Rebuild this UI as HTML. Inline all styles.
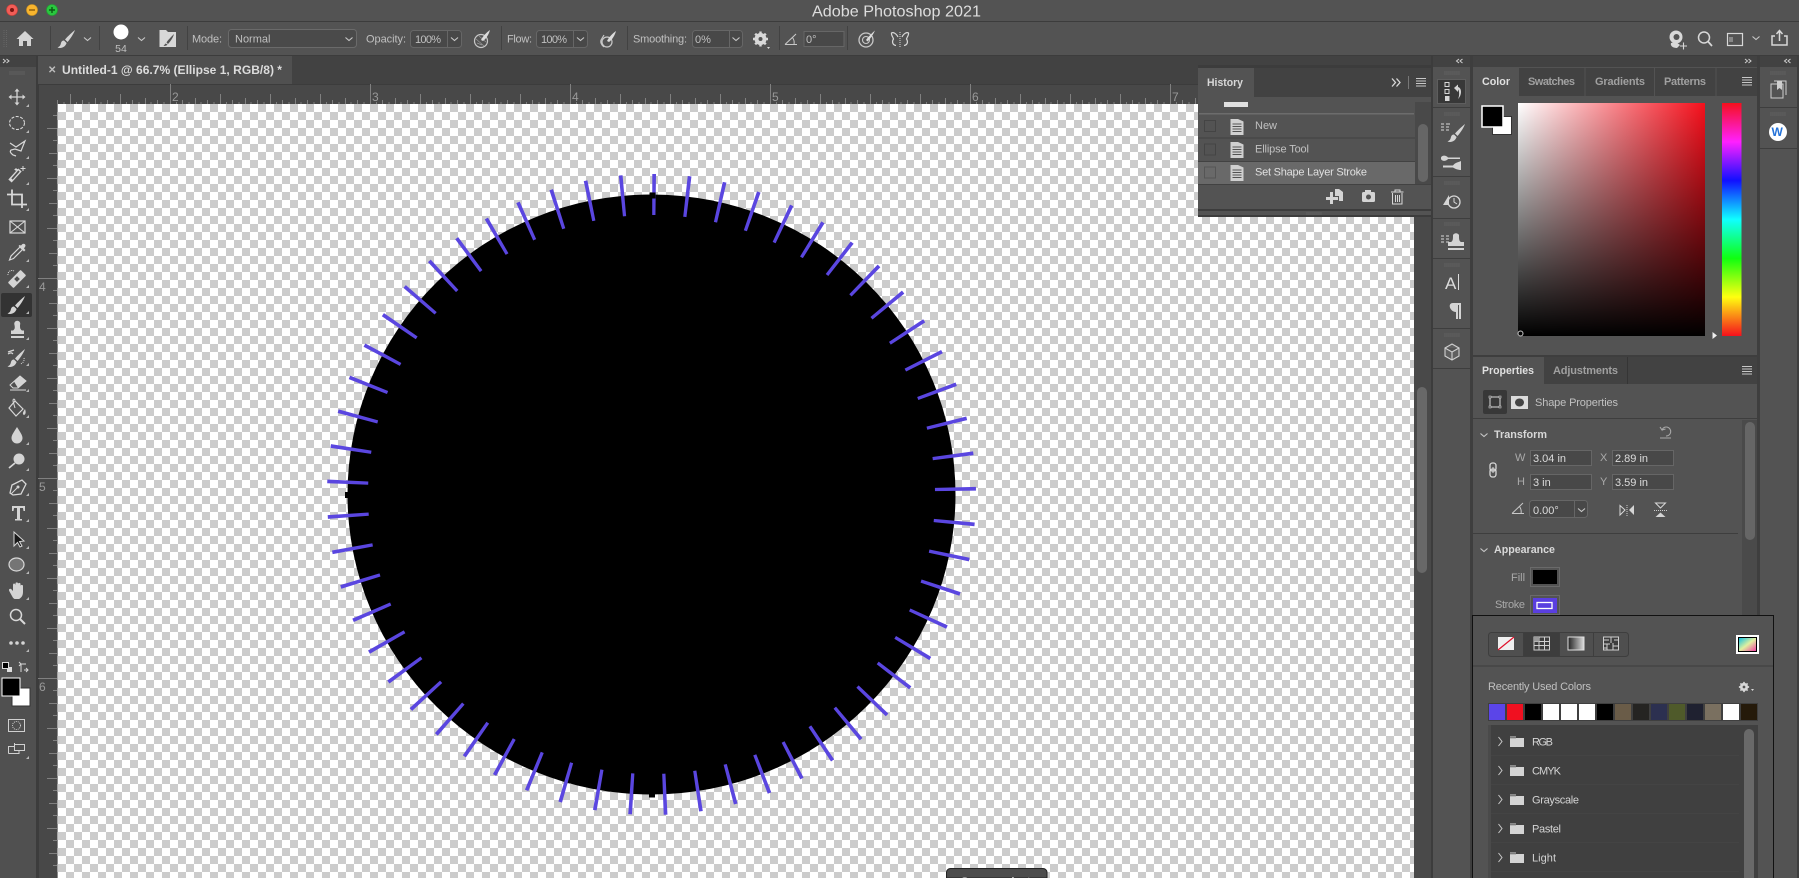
<!DOCTYPE html>
<html><head><meta charset="utf-8"><title>Adobe Photoshop 2021</title>
<style>
html,body{margin:0;padding:0;background:#535353;overflow:hidden;width:1799px;height:878px}
svg{display:block;font-family:"Liberation Sans",sans-serif}
text{fill:#c0c0c0;font-size:11px}
.b{font-weight:bold;fill:#d8d8d8}
.i{fill:#d4d4d4}
.s{fill:none;stroke:#d4d4d4;stroke-width:1.3}
</style></head><body>
<svg width="1799" height="878" viewBox="0 0 1799 878" xmlns="http://www.w3.org/2000/svg">
<defs>
<pattern id="chk" x="58" y="104" width="16" height="16" patternUnits="userSpaceOnUse">
<rect width="16" height="16" fill="#fff"/><rect x="8" width="8" height="8" fill="#ccc"/><rect y="8" width="8" height="8" fill="#ccc"/>
</pattern>
<pattern id="rh" x="170" y="84" width="200" height="20" patternUnits="userSpaceOnUse">
<g stroke="#808080" stroke-width="1">
<path d="M.5 0V20M50.5 10V20M100.5 10V20M150.5 10V20M25.5 14V20M75.5 14V20M125.5 14V20M175.5 14V20M12.5 16V20M37.5 16V20M62.5 16V20M87.5 16V20M112.5 16V20M137.5 16V20M162.5 16V20M187.5 16V20M6.5 18V20M19 18V20M31 18V20M44 18V20M56.5 18V20M69 18V20M81 18V20M94 18V20M106.5 18V20M119 18V20M131 18V20M144 18V20M156.5 18V20M169 18V20M181 18V20M194 18V20"/>
</g></pattern>
<pattern id="rv" x="38" y="78" width="19" height="200" patternUnits="userSpaceOnUse">
<g stroke="#808080" stroke-width="1">
<path d="M0 .5H19M9 50.5H19M9 100.5H19M9 150.5H19M11 25.5H19M11 75.5H19M11 125.5H19M11 175.5H19M15 12.5H19M15 37.5H19M15 62.5H19M15 87.5H19M15 112.5H19M15 137.5H19M15 162.5H19M15 187.5H19"/>
</g></pattern>
<linearGradient id="wr" x1="0" x2="1" y1="0" y2="0"><stop offset="0" stop-color="#fff"/><stop offset="1" stop-color="#f5101c"/></linearGradient>
<linearGradient id="bk" x1="0" x2="0" y1="0" y2="1"><stop offset="0" stop-color="#000" stop-opacity="0"/><stop offset="1" stop-color="#000"/></linearGradient>
<linearGradient id="hue" x1="0" x2="0" y1="0" y2="1"><stop offset="0" stop-color="#f5101c"/><stop offset=".167" stop-color="#ff20ff"/><stop offset=".333" stop-color="#1010ff"/><stop offset=".5" stop-color="#10ffff"/><stop offset=".667" stop-color="#10ff10"/><stop offset=".833" stop-color="#ffff10"/><stop offset="1" stop-color="#f5101c"/></linearGradient>
<linearGradient id="gg" x1="0" x2="1" y1="0" y2="0"><stop offset="0" stop-color="#222"/><stop offset="1" stop-color="#ddd"/></linearGradient>
<linearGradient id="rb" x1="0" x2="1" y1="0" y2="1"><stop offset="0" stop-color="#10c0e0"/><stop offset=".5" stop-color="#e0f0a0"/><stop offset="1" stop-color="#f040a0"/></linearGradient>
<g id="chev"><path d="M-3.5 -1.5L0 1.5L3.5 -1.5" fill="none" stroke="#c8c8c8" stroke-width="1.1"/></g>
<g id="menu"><path d="M-5 -3.5H5M-5 -1H5M-5 1.5H5M-5 4H5" stroke="#c8c8c8" stroke-width="1"/></g>
<g id="brush"><path class="i" d="M9 -9C6.5 -7 1.5 -2.5 -1 .5L1.6 3C4.6 -.5 7.8 -5.5 9 -9Z M-2 1.5C-5 1.5 -5 4.5 -5.5 5.8C-6 7.2 -7.5 8 -8.5 8.5C-5 9.8 -1 8.5 .6 4Z"/></g>
<g id="gear"><circle cx="0" cy="0" r="4.5" fill="none" stroke="#d8d8d8" stroke-width="3"/><path d="M0 -7.5V7.5M-7.5 0H7.5M-5.3 -5.3L5.3 5.3M5.3 -5.3L-5.3 5.3" stroke="#d8d8d8" stroke-width="2.4"/><circle r="2" fill="#535353"/></g>
<g id="doc"><path d="M-6.5 -8H1L6.5 -5.5V8H-6.5Z" fill="#d0d0d0"/><path d="M-4.5 -3H4.5M-4.5 -.5H4.5M-4.5 2H4.5M-4.5 4.5H4.5" stroke="#535353" stroke-width="1"/></g>
<g id="folder"><path d="M-7 -5H-1V-3.5H7V5.5H-7Z" fill="#d4d4d4"/><path d="M-7 -3.7H-1" stroke="#404040" stroke-width=".8"/></g>
<g id="tri"><path d="M0 3H3V0Z" fill="#b8b8b8"/></g>
<g id="grip"><path d="M-7 -2V2M-5 -2V2M-3 -2V2M-1 -2V2M1 -2V2M3 -2V2M5 -2V2M7 -2V2" stroke="#666" stroke-width=".7"/></g>
</defs>

<rect width="1799" height="878" fill="#535353"/>
<!-- title -->
<rect y="21" width="1799" height="1" fill="#3c3c3c"/>
<circle cx="12" cy="10" r="5.5" fill="#f25d57" stroke="#d8403a" stroke-width=".6"/><circle cx="12" cy="10" r="2" fill="#7a1612"/>
<circle cx="32" cy="10" r="5.5" fill="#f8b52e" stroke="#d89a20" stroke-width=".6"/><path d="M29 10H35" stroke="#8a5a0a" stroke-width="1.4"/>
<circle cx="52" cy="10" r="5.5" fill="#2ac73f" stroke="#1ea52f" stroke-width=".6"/><path d="M49 10H55M52 7V13" stroke="#0a5a14" stroke-width="1.4"/>
<text x="812" y="16.5" textLength="169" lengthAdjust="spacingAndGlyphs" style="font-size:16px;fill:#dedede">Adobe Photoshop 2021</text>

<!-- options bar -->
<rect y="55" width="1799" height="1" fill="#3c3c3c"/>
<path d="M4 30V47M6.5 30V47" stroke="#656565" stroke-dasharray="1 1"/>
<path d="M50 26H51V50H50ZM99 26H100V50H99ZM187 26H188V50H187ZM501 26H502V50H501ZM627 26H628V50H627ZM779 26H780V50H779ZM847 26H848V50H847Z" fill="#424242"/>
<path class="i" d="M25 31L33.5 39H31V46H27V41H23V46H19V39H16.5Z"/>
<use href="#brush" x="66" y="39"/><use href="#chev" x="87.500" y="39"/>
<circle cx="121" cy="32" r="7.500" fill="#fff"/>
<text x="121" y="52" text-anchor="middle" style="font-size:10.500px">54</text>
<use href="#chev" x="141.500" y="39"/>
<path d="M159.500 30H166L168 32H176V47H159.500Z" fill="#d8d8d8"/><path d="M174 34C171 37 168 40 166.500 42.500L168 44C170 42 173 38 174 34ZM165.500 43.500L163.500 46C165.500 46 167 45.500 167.500 44.500Z" fill="#535353"/>
<text x="192" y="42.500" textLength="30">Mode:</text>
<rect x="228.500" y="29.500" width="128" height="18" rx="3" fill="#4a4a4a" stroke="#6a6a6a"/>
<text x="235" y="42.500">Normal</text><use href="#chev" x="349" y="39"/>
<text x="366" y="42.500" textLength="40">Opacity:</text>
<rect x="410.500" y="30.500" width="51" height="17" rx="3" fill="#484848" stroke="#666"/><path d="M447.500 31V47" stroke="#666"/>
<text x="415" y="43" textLength="26">100%</text><use href="#chev" x="454.500" y="39"/>
<circle cx="481" cy="41" r="6.500" fill="none" stroke="#c8c8c8" stroke-width="1.2"/><path d="M477 43L482 45M476 39L484 46M479 36L486 42" stroke="#999" stroke-width=".7"/><path d="M490 30C487 32 483 36 481 40L483 41C486 39 489 34 490 30Z" fill="#dcdcdc"/>
<text x="507" y="42.500" textLength="25">Flow:</text>
<rect x="536.500" y="30.500" width="51" height="17" rx="3" fill="#484848" stroke="#666"/><path d="M573.500 31V47" stroke="#666"/>
<text x="541" y="43" textLength="26">100%</text><use href="#chev" x="580.500" y="39"/>
<path d="M601 40C600 44 603 46 604 47M604 35L601 40" fill="none" stroke="#c8c8c8" stroke-width="1.200"/><circle cx="607" cy="42" r="5" fill="none" stroke="#c8c8c8" stroke-width="1.200"/><path d="M616 31C613 33 609 37 607 41L609 42C612 40 615 35 616 31Z" fill="#dcdcdc"/>
<text x="633" y="42.500" textLength="54">Smoothing:</text>
<rect x="692.500" y="30.500" width="50" height="17" rx="3" fill="#484848" stroke="#666"/><path d="M729.500 31V47" stroke="#666"/>
<text x="695" y="43">0%</text><use href="#chev" x="736" y="39"/>
<use href="#gear" x="760.500" y="39"/><path d="M767 47H770L768.500 49Z" fill="#d8d8d8"/>
<path d="M785 44.500H797M785 44.500L796 34" fill="none" stroke="#c8c8c8" stroke-width="1.100"/><path d="M792.500 37.500A9 9 0 0 1 794 44.500" fill="none" stroke="#c8c8c8"/>
<rect x="804" y="31.500" width="40" height="15" fill="#484848" stroke="#666"/><text x="806" y="43">0°</text>
<circle cx="866" cy="40" r="7" fill="none" stroke="#c8c8c8" stroke-width="1.300"/><circle cx="866" cy="40" r="3.500" fill="none" stroke="#c8c8c8" stroke-width="1.100"/><path d="M875 30.500C872 33 868 37 866 40L867.500 41.500C870 39 873 35 875 30.500Z" fill="#dcdcdc"/>
<path d="M900 32V47" stroke="#d8d8d8" stroke-dasharray="1 1"/><path d="M898 37C896 33 893 32 891.500 33C891 35 893 37 893.500 39C892 41 892 45 896 45.500M902 37C904 33 907 32 908.500 33C909 35 907 37 906.500 39C908 41 908 45 904 45.500" fill="none" stroke="#d8d8d8" stroke-width="1.200"/>
<circle cx="1676" cy="37" r="6.500" fill="#d8d8d8"/><path d="M1671 43C1670 46 1673 48 1677 48L1680 45L1676 42Z" fill="#d8d8d8"/><circle cx="1676.500" cy="37" r="3" fill="#535353"/><path d="M1680 46H1687M1683.500 42.500V49.500" stroke="#d8d8d8" stroke-width="1.100"/>
<circle cx="1704" cy="37.500" r="5.500" fill="none" stroke="#d8d8d8" stroke-width="1.500"/><path d="M1708 41.500L1712 46" stroke="#d8d8d8" stroke-width="1.700"/>
<rect x="1727.500" y="33.500" width="15" height="12" fill="none" stroke="#d8d8d8" stroke-width="1.200"/><path d="M1730 37V42M1732 37V42" stroke="#d8d8d8" stroke-width=".8"/>
<use href="#chev" x="1756" y="38"/>
<path d="M1775 36H1772V45H1787V36H1784" fill="none" stroke="#d8d8d8" stroke-width="1.500"/><path d="M1779.500 41V31M1776.500 34L1779.500 30.500L1782.500 34" fill="none" stroke="#d8d8d8" stroke-width="1.500"/>

<!-- doc area -->
<rect x="38" y="56" width="1394" height="28" fill="#424242"/>
<rect x="38" y="56" width="254" height="28" fill="#505050"/>
<text x="48" y="73" class="b" style="font-size:10px;fill:#bdbdbd">✕</text>
<text x="62" y="74" class="b" textLength="220" lengthAdjust="spacingAndGlyphs" style="font-size:12px;fill:#dcdcdc">Untitled-1 @ 66.7% (Ellipse 1, RGB/8) *</text>
<rect x="38" y="84" width="1376" height="20" fill="#484848"/>
<rect x="38" y="104" width="19.500" height="774" fill="#484848"/>
<rect x="38" y="84" width="1" height="794" fill="#3c3c3c"/>
<rect x="38" y="84" width="1376" height="1" fill="#3c3c3c"/>
<rect x="57" y="84" width="1357" height="20" fill="url(#rh)"/>
<rect x="38" y="104" width="19" height="774" fill="url(#rv)"/>
<text x="172" y="101" style="font-size:12px;fill:#999">2</text><text x="372" y="101" style="font-size:12px;fill:#999">3</text><text x="572" y="101" style="font-size:12px;fill:#999">4</text><text x="772" y="101" style="font-size:12px;fill:#999">5</text><text x="972" y="101" style="font-size:12px;fill:#999">6</text><text x="1172" y="101" style="font-size:12px;fill:#999">7</text>
<text x="39" y="291" style="font-size:12px;fill:#999">4</text><text x="39" y="491" style="font-size:12px;fill:#999">5</text><text x="39" y="691" style="font-size:12px;fill:#999">6</text>
<rect x="57.500" y="104" width="1356.500" height="774" fill="url(#chk)"/>
<!-- artwork -->
<ellipse cx="651.500" cy="494.500" rx="304" ry="300" fill="#000"/>
<path d="M651.500 194.500A304 300 0 1 1 651.500 794.500A304 300 0 1 1 651.500 194.500" fill="none" stroke="#5a46e0" stroke-width="41" stroke-dasharray="3.500 29.820" stroke-dashoffset="-0.750"/>
<rect x="649.500" y="192.500" width="6" height="6" fill="#000"/><rect x="345" y="492" width="5" height="6" fill="#000"/><rect x="649" y="791.500" width="6" height="6" fill="#000"/>
<!-- pill -->
<path d="M946.500 878V872A4 4 0 0 1 950.500 868.500H1043A4 4 0 0 1 1047 872V878Z" fill="#4c4c4c" stroke="#222"/>
<text x="960" y="887" style="font-size:14px;fill:#eee">Screenshot</text>
<!-- canvas scrollbar -->
<rect x="1414" y="84" width="17" height="794" fill="#494949"/>
<rect x="1417" y="387" width="10" height="186" rx="5" fill="#686868"/>

<!-- left tools -->
<rect x="0" y="56" width="36" height="822" fill="#505050"/>
<rect x="0" y="56" width="36" height="11" fill="#424242"/>
<rect x="36" y="56" width="2" height="822" fill="#3c3c3c"/>
<path d="M3 59L5.500 61L3 63M6.500 59L9 61L6.500 63" fill="none" stroke="#d0d0d0"/>
<use href="#grip" x="17" y="73"/>
<rect x="1" y="293" width="31" height="24" rx="2" fill="#333"/>
<!-- move -->
<g transform="translate(17 97)"><path d="M0 -7V7M-7 0H7" class="s"/><path class="i" d="M0 -8.500L-2.500 -5.500H2.500ZM0 8.500L-2.500 5.500H2.500ZM-8.500 0L-5.500 -2.500V2.500ZM8.500 0L5.500 -2.500V2.500Z"/></g><use href="#tri" x="26" y="104"/>
<!-- marquee -->
<ellipse cx="17" cy="123" rx="7.500" ry="6.500" fill="none" stroke="#d8d8d8" stroke-width="1.100" stroke-dasharray="3 1.500"/><use href="#tri" x="26" y="130"/>
<!-- lasso -->
<path d="M10 143L16 147L25 141L21 151L15 149L11 150C9 152 12 154 13 155L16 156" fill="none" stroke="#d8d8d8" stroke-width="1.200"/><use href="#tri" x="26" y="156"/>
<!-- wand -->
<path d="M20 170L10 181" stroke="#d8d8d8" stroke-width="4.500"/><path d="M19 171L12 179" stroke="#505050" stroke-width="1.800"/><path d="M23 166V171M20.500 168.500H25.500M16 168V171M14.500 169.500H17.500" stroke="#d8d8d8"/><use href="#tri" x="26" y="182"/>
<!-- crop -->
<path d="M7 194.500H22V208M12 189.500V204.500H27" fill="none" stroke="#d8d8d8" stroke-width="1.800"/><use href="#tri" x="26" y="208"/>
<!-- frame -->
<rect x="10" y="221" width="15" height="12" fill="none" stroke="#d8d8d8" stroke-width="1.200"/><path d="M10 221L25 233M25 221L10 233" stroke="#d8d8d8" stroke-width="1.100"/>
<!-- eyedropper -->
<path d="M20 247L11 256L9.500 260L13.500 258.500L22.500 249.500Z" fill="none" stroke="#d8d8d8" stroke-width="1.200"/><path d="M18.500 246L24 251.500L25.500 250L24 248.500L25.500 246A2 2 0 0 0 22.500 244L21 245.500L19.500 245Z" class="i"/><use href="#tri" x="26" y="259"/>
<!-- heal -->
<g transform="translate(17 279) rotate(-45)"><rect x="-9" y="-4" width="18" height="8" rx="1" class="i"/><path d="M-2 -2H2V2H-2Z" fill="#505050"/></g><path d="M8 275A4 4 0 0 1 14 271" fill="none" stroke="#d8d8d8" stroke-dasharray="1 1"/><use href="#tri" x="26" y="285"/>
<!-- brush -->
<use href="#brush" x="16" y="305"/><use href="#tri" x="26" y="311"/>
<!-- stamp -->
<g transform="translate(0 3)"><path class="i" d="M14.500 322A3 3 0 1 1 20 322C20 325 20 326 22 327.500H24V331H11V327.500H13C15 326 15 325 14.500 322ZM11 333H24V335H11Z"/></g><use href="#tri" x="26" y="337"/>
<!-- mixer -->
<use href="#brush" x="16" y="358"/><path d="M8 352L14 350M8 354C11 352 12 353 13 354" fill="none" stroke="#d8d8d8" stroke-width="1.200"/><path d="M24 358A5 5 0 0 1 20 364" fill="none" stroke="#d8d8d8" stroke-dasharray="1 1"/><use href="#tri" x="26" y="363"/>
<!-- eraser -->
<path class="i" d="M20 376L26 381L18 388H13L10 385Z"/><path d="M10 385L13 388H18L14 381.500Z" fill="#505050"/><path d="M20 376L26 381L18 388H13L10 385Z" fill="none" stroke="#d8d8d8"/><path d="M10 390H26" stroke="#d8d8d8"/><use href="#tri" x="26" y="389"/>
<!-- bucket -->
<path d="M9 408L15 401L23 409L16 416Z" fill="none" stroke="#d8d8d8" stroke-width="1.200"/><path d="M15 408L13 401C13 398 15 399 15 401" fill="none" stroke="#d8d8d8"/><path class="i" d="M25 409C23 412 22 414 24 415C26 414 26 412 25 409Z"/><use href="#tri" x="26" y="415"/>
<!-- drop -->
<path class="i" d="M17 427C14 432 11.500 435 11.500 438A5.500 5.500 0 0 0 22.500 438C22.500 435 20 432 17 427Z"/><use href="#tri" x="26" y="442"/>
<!-- dodge -->
<circle cx="19" cy="459" r="5.500" class="i"/><path d="M15 463L9 468" stroke="#d8d8d8" stroke-width="1.700"/><use href="#tri" x="26" y="468"/>
<!-- pen -->
<path d="M10 493L12 485L22 480L26 484L21 494L13 495Z" fill="none" stroke="#d8d8d8" stroke-width="1.300"/><path d="M11 494L17 488" stroke="#d8d8d8"/><circle cx="18" cy="487" r="1.500" class="i"/><use href="#tri" x="26" y="493"/>
<!-- type -->
<path class="i" d="M12 506H25V511H23.500L23 508H20V519H22V520.500H15V519H17V508H14L13.500 511H12Z"/><use href="#tri" x="26" y="519"/>
<!-- path select -->
<path d="M14 532V546L17.500 542.500L20 547L22 546L19.500 541.500L24 541Z" fill="#1a1a1a" stroke="#d8d8d8"/><use href="#tri" x="26" y="546"/>
<!-- ellipse -->
<ellipse cx="16.500" cy="564.500" rx="7.500" ry="6.500" fill="#757575" stroke="#d8d8d8" stroke-width="1.200"/><use href="#tri" x="26" y="571"/>
<!-- hand -->
<path class="i" d="M12 596C10 592 8 590 9.500 589C11 588 12 590 13 591V585C13 583 15 583 15.500 585V588V583.500C15.500 582 18 582 18 583.500V588V584C18 582.500 20.500 582.500 20.500 584V589V586C20.500 584.500 23 584.500 23 586V592C23 596 21 598 19 599H15C14 599 13 598 12 596Z"/><use href="#tri" x="26" y="597"/>
<!-- zoom -->
<circle cx="16" cy="615" r="5.500" fill="none" stroke="#d8d8d8" stroke-width="1.500"/><path d="M20 619L25 624" stroke="#d8d8d8" stroke-width="2"/>
<!-- dots -->
<circle cx="11" cy="643" r="1.800" class="i"/><circle cx="17" cy="643" r="1.800" class="i"/><circle cx="23" cy="643" r="1.800" class="i"/><use href="#tri" x="26" y="649"/>
<!-- default/swap -->
<rect x="7" y="667" width="5" height="5" fill="#ddd"/><rect x="2.500" y="662.500" width="6" height="6" fill="#000" stroke="#ddd"/>
<path d="M21 672V664H26M19 666L21 664L19 662M24 670H28M26 672L28 670L26 668" fill="none" stroke="#d8d8d8" stroke-width="1"/>
<rect x="12" y="688" width="18" height="18" fill="#fff" stroke="#333"/>
<rect x="2" y="678" width="18" height="18" fill="#000" stroke="#fff"/>
<rect x="8.500" y="719.500" width="16" height="12" fill="none" stroke="#d0d0d0"/><circle cx="16.500" cy="725.500" r="4" fill="none" stroke="#d0d0d0" stroke-dasharray="1 1"/>
<path d="M8.500 753.500V746.500H14.500M14.500 743V750.500H24.500V744.500H14.500M8.500 753.500H19V750.500" fill="none" stroke="#d0d0d0"/><use href="#tri" x="26" y="756"/>

<!-- right dock base -->
<rect x="1431" y="56" width="368" height="822" fill="#535353"/>
<rect x="1431" y="56" width="368" height="11" fill="#424242"/>
<path d="M1459 59L1456.500 61L1459 63M1462.500 59L1460 61L1462.500 63M1745 59L1747.500 61L1745 63M1748.500 59L1751 61L1748.500 63M1787 59L1784.500 61L1787 63M1790.500 59L1788 61L1790.500 63" fill="none" stroke="#d0d0d0"/>
<rect x="1431" y="56" width="2" height="822" fill="#3c3c3c"/>
<rect x="1470" y="56" width="3" height="822" fill="#3e3e3e"/>
<rect x="1757" y="56" width="3" height="822" fill="#3e3e3e"/>
<rect x="1797" y="56" width="2" height="822" fill="#3e3e3e"/>
<!-- icon column -->
<path d="M1433 107.500H1470M1433 176.500H1470M1433 218.500H1470M1433 258.500H1470M1433 328.500H1470M1433 368.500H1470M1760 107.500H1797M1760 148.500H1797" stroke="#3e3e3e" stroke-width="1"/>
<use href="#grip" x="1452" y="73"/><use href="#grip" x="1452" y="114"/><use href="#grip" x="1452" y="183"/><use href="#grip" x="1452" y="224"/><use href="#grip" x="1452" y="265"/><use href="#grip" x="1452" y="335"/><use href="#grip" x="1778" y="73"/><use href="#grip" x="1778" y="114"/>
<rect x="1437.500" y="79.500" width="28" height="24" fill="#383838" stroke="#5e5e5e"/>
<rect x="1445" y="82.500" width="4" height="4" fill="none" stroke="#d8d8d8"/><rect x="1445" y="89.500" width="4" height="4" fill="none" stroke="#d8d8d8"/><rect x="1445" y="96" width="4.500" height="5" fill="#d8d8d8"/>
<path d="M1454 88L1458 84.500V87C1462 88 1462 95 1458 99C1460 95 1459 90 1458 89.500V92Z" class="i"/>
<use href="#brush" x="1456" y="133"/><path d="M1441 124H1444M1441 127H1444M1441 130H1444M1446 124H1450M1446 127H1449M1446 130H1449" stroke="#d8d8d8"/>
<path class="i" d="M1441 157.500C1442 155 1446 155 1448 157.500H1460V159H1448C1446 161.500 1442 161.500 1441 159ZM1443 165.500H1453C1455 162.500 1459 162 1461 161V170C1459 170 1455 169 1453 167.500H1443Z"/>
<path class="i" d="M1449 195L1443 205H1449Z"/><circle cx="1454" cy="202" r="6" fill="none" stroke="#d8d8d8" stroke-width="1.300"/><path d="M1454 198V202L1457 204" fill="none" stroke="#d8d8d8"/>
<path d="M1441 236H1444M1441 239H1444M1441 242H1444M1446 236H1449M1446 239H1449M1446 242H1449" stroke="#d8d8d8"/><path class="i" d="M1453 235A3.500 3.500 0 0 1 1459 235C1459 239 1459 241 1461 242H1464V246H1448V242H1451C1453 241 1453 239 1453 235ZM1448 248H1464V250H1448Z"/>
<text x="1445" y="289" style="font-size:17px;fill:#dcdcdc">A</text><path d="M1458.500 274V290" stroke="#dcdcdc"/>
<path class="i" d="M1453 303H1461V319H1459V305H1458V319H1456V312C1450 312 1447 303 1453 303Z"/>
<path d="M1452 344L1459 348V356L1452 360L1445 356V348ZM1445 348L1452 352L1459 348M1452 352V360" fill="#606060" stroke="#d0d0d0" stroke-width="1.100"/>
<path d="M1771 84H1783V98H1771Z" fill="none" stroke="#cfcfcf"/><path d="M1774 81H1786V95" fill="none" stroke="#cfcfcf"/><path d="M1777 81V90L1779.500 88L1782 90V81Z" fill="#cfcfcf"/>
<rect x="1769" y="123" width="18" height="18" rx="9" fill="#fff"/><text x="1771.500" y="136" style="font-size:12px;font-weight:bold;fill:#2372d9">W</text>

<!-- history panel -->
<rect x="1198" y="65" width="233" height="152" fill="#535353"/>
<rect x="1198" y="65" width="233" height="3" fill="#3c3c3c"/>
<rect x="1198" y="68" width="233" height="29" fill="#424242"/>
<rect x="1198" y="68" width="56" height="29" fill="#535353"/>
<text x="1207" y="86" class="b" textLength="36" lengthAdjust="spacingAndGlyphs">History</text>
<path d="M1392 78.500L1395.500 82.500L1392 86.500M1396.500 78.500L1400 82.500L1396.500 86.500" fill="none" stroke="#d8d8d8" stroke-width="1.300"/><path d="M1408.500 76V89" stroke="#777"/><use href="#menu" x="1421" y="82"/>
<rect x="1224" y="102" width="24" height="5" fill="#e0e0e0"/>
<rect x="1199" y="113" width="215" height="1.500" fill="#6c6c6c"/>
<rect x="1198" y="162" width="217" height="22" fill="#696969"/>
<path d="M1198 138H1415M1198 161.500H1415M1198 184.500H1431" stroke="#424242"/>
<rect x="1204.500" y="120.500" width="11" height="11" fill="none" stroke="#444"/><rect x="1204.500" y="144" width="11" height="11" fill="none" stroke="#444"/><rect x="1204.500" y="167" width="11" height="11" fill="none" stroke="#555"/>
<use href="#doc" x="1237" y="127"/><use href="#doc" x="1237" y="150"/><use href="#doc" x="1237" y="173"/>
<text x="1255" y="129">New</text><text x="1255" y="152.500" textLength="54">Ellipse Tool</text><text x="1255" y="175.500" textLength="112" style="fill:#e0e0e0">Set Shape Layer Stroke</text>
<rect x="1415" y="102" width="16" height="82" fill="#494949"/>
<rect x="1418" y="124" width="10" height="58" rx="5" fill="#666"/>
<path class="i" d="M1330 192H1333V197H1338V200H1333V204H1330V200H1326V197H1330ZM1335 189H1339L1343 192V201H1339V196H1335Z"/>
<rect x="1362" y="192" width="13" height="10" rx="1.500" class="i"/><rect x="1365" y="190" width="6" height="3" class="i"/><circle cx="1368.500" cy="197" r="2.500" fill="#535353"/>
<path d="M1392.500 193V204H1402V193M1391 192H1403.500M1395 192V190H1400V192M1395.500 195V202M1397.500 195V202M1399.500 195V202" fill="none" stroke="#d8d8d8"/>
<rect x="1198" y="209" width="233" height="2" fill="#3c3c3c"/>
<use href="#grip" x="1314" y="214"/>
<rect x="1198" y="215" width="233" height="2" fill="#3c3c3c"/>

<!-- color panel -->
<rect x="1473" y="68" width="284" height="28" fill="#424242"/>
<rect x="1473" y="68" width="46" height="28" fill="#535353"/>
<path d="M1585 68V96M1654.500 68V96M1716 68V96" stroke="#535353"/>
<text x="1482" y="85" class="b" textLength="28" lengthAdjust="spacingAndGlyphs" style="fill:#e0e0e0">Color</text>
<text x="1528" y="85" textLength="47" style="font-weight:bold;fill:#a0a0a0">Swatches</text><text x="1595" y="85" textLength="50" style="font-weight:bold;fill:#a0a0a0">Gradients</text><text x="1664" y="85" textLength="42" style="font-weight:bold;fill:#a0a0a0">Patterns</text>
<use href="#menu" x="1747" y="81"/>
<rect x="1492.500" y="116.500" width="19" height="18" fill="#fff" stroke="#333"/>
<rect x="1482" y="106" width="21" height="21" fill="#000" stroke="#fff" stroke-width="1.500"/>
<rect x="1518" y="103" width="187" height="233" fill="url(#wr)"/><rect x="1518" y="103" width="187" height="233" fill="url(#bk)"/>
<rect x="1722" y="103" width="19.500" height="233" fill="url(#hue)"/>
<circle cx="1520.500" cy="333.500" r="2.500" fill="none" stroke="#ccc"/><path d="M1712.500 332L1717 335.500L1712.500 339Z" fill="#eee"/>
<rect x="1473" y="355" width="284" height="2" fill="#3e3e3e"/>

<!-- properties -->
<rect x="1473" y="357" width="284" height="27" fill="#424242"/>
<rect x="1473" y="357" width="71" height="27" fill="#535353"/>
<path d="M1627.500 357V384" stroke="#353535"/>
<text x="1482" y="374" class="b" textLength="52" lengthAdjust="spacingAndGlyphs" style="fill:#e0e0e0">Properties</text>
<text x="1553" y="374" textLength="65" style="font-weight:bold;fill:#a0a0a0">Adjustments</text>
<use href="#menu" x="1747" y="370"/>
<rect x="1483" y="390" width="24" height="24" rx="2" fill="#383838"/>
<rect x="1490" y="397" width="10" height="10" fill="none" stroke="#d8d8d8"/><path d="M1489 396H1491V398H1489ZM1499 396H1501V398H1499ZM1489 406H1491V408H1489ZM1499 406H1501V408H1499Z" fill="#383838" stroke="#d8d8d8" stroke-width=".6"/>
<rect x="1511" y="396" width="17" height="13" fill="#dcdcdc"/><ellipse cx="1519.500" cy="402.500" rx="4.500" ry="4" fill="#444"/>
<text x="1535" y="406" textLength="83">Shape Properties</text>
<path d="M1473 418.500H1757" stroke="#3e3e3e"/>
<use href="#chev" x="1484" y="435"/>
<text x="1494" y="438" class="b" textLength="53" lengthAdjust="spacingAndGlyphs">Transform</text>
<path d="M1666 436A4.500 4.500 0 1 0 1662 430L1660 427M1662 430L1665.500 429M1660 438H1671" fill="none" stroke="#a8a8a8" stroke-width="1.100"/>
<text x="1515" y="461" style="fill:#aaa">W</text>
<rect x="1530.500" y="450.500" width="61" height="15" fill="#484848" stroke="#666"/><text x="1533" y="462" style="fill:#dcdcdc">3.04 in</text>
<text x="1600" y="461" style="fill:#aaa">X</text>
<rect x="1612.500" y="450.500" width="61" height="15" fill="#484848" stroke="#666"/><text x="1615" y="462" style="fill:#dcdcdc">2.89 in</text>
<text x="1517" y="485" style="fill:#aaa">H</text>
<rect x="1530.500" y="474.500" width="61" height="15" fill="#484848" stroke="#666"/><text x="1533" y="486" style="fill:#dcdcdc">3 in</text>
<text x="1600" y="485" style="fill:#aaa">Y</text>
<rect x="1612.500" y="474.500" width="61" height="15" fill="#484848" stroke="#666"/><text x="1615" y="486" style="fill:#dcdcdc">3.59 in</text>
<rect x="1490" y="463" width="6" height="8" rx="2.500" fill="none" stroke="#d8d8d8" stroke-width="1.300"/><rect x="1490" y="469" width="6" height="8" rx="2.500" fill="none" stroke="#d8d8d8" stroke-width="1.300"/><path d="M1493 467V473" stroke="#d8d8d8"/>
<path d="M1512 513.500H1524M1512 513.500L1523 503M1519.500 506.500A9 9 0 0 1 1521 513.500" fill="none" stroke="#c8c8c8"/>
<rect x="1529.500" y="500.500" width="58" height="17" rx="3" fill="#484848" stroke="#666"/><path d="M1574.500 501V517" stroke="#666"/>
<text x="1533" y="514" style="fill:#dcdcdc">0.00°</text><use href="#chev" x="1581.500" y="510"/>
<path d="M1625 505V516" stroke="#ccc" stroke-dasharray="1 1" stroke-width="1" transform="translate(2 0)"/><path d="M1620 505.500L1625 510L1620 515Z" fill="none" stroke="#d8d8d8"/><path d="M1634 505L1629 510L1634 515Z" class="i"/>
<path d="M1654 510.500H1667" stroke="#ccc" stroke-dasharray="1 1"/><path d="M1655.500 503H1665.500L1660.500 508Z" fill="none" stroke="#d8d8d8"/><path d="M1655.500 517H1665.500L1660.500 512.500Z" class="i"/>
<path d="M1473 533.500H1738" stroke="#3e3e3e"/>
<use href="#chev" x="1484" y="550"/>
<text x="1494" y="553" class="b" textLength="61" lengthAdjust="spacingAndGlyphs">Appearance</text>
<text x="1511" y="581" style="fill:#aaa">Fill</text>
<rect x="1530.500" y="567.500" width="29" height="19" fill="#535353" stroke="#6a6a6a"/><rect x="1533" y="570" width="24" height="14" fill="#000"/>
<text x="1495" y="608" textLength="30" style="fill:#aaa">Stroke</text>
<rect x="1530.500" y="595.500" width="29" height="19" fill="#535353" stroke="#6a6a6a"/><rect x="1533" y="598" width="24" height="15" fill="#5a3fe0"/><rect x="1537" y="602.500" width="15" height="6" fill="none" stroke="#fff" stroke-width="1.300"/>
<rect x="1742" y="420" width="15" height="200" fill="#4a4a4a"/>
<rect x="1745" y="422" width="10" height="118" rx="5" fill="#666"/>

<!-- popup -->
<rect x="1472.500" y="615.500" width="301" height="270" fill="#535353" stroke="#111"/>
<rect x="1488.500" y="632.500" width="140" height="24" rx="3" fill="#4f4f4f" stroke="#3e3e3e"/>
<rect x="1524" y="633" width="35" height="23" fill="#3d3d3d"/>
<path d="M1523.500 633V656M1559.500 633V656M1593.500 633V656" stroke="#3e3e3e"/>
<rect x="1498" y="637" width="16" height="13" fill="#f0f0f0"/><path d="M1498 650L1514 637" stroke="#e0102a" stroke-width="1.200"/>
<rect x="1534" y="637" width="15.500" height="13" fill="#3d3d3d" stroke="#cfcfcf"/><path d="M1534 641.500H1549.500M1534 645.500H1549.500M1539 637V650M1544.500 637V650" stroke="#cfcfcf"/><rect x="1534" y="637" width="5" height="4.500" fill="#999"/>
<rect x="1568" y="637" width="16" height="13" fill="url(#gg)" stroke="#e0e0e0"/>
<rect x="1603.500" y="637" width="15" height="13" fill="#3d3d3d" stroke="#cfcfcf"/><path d="M1604 640H1609M1611 637V643M1614 640H1618M1604 644H1610M1607 644V650M1613 643V650M1613 646H1618M1604 648H1607" stroke="#cfcfcf"/>
<rect x="1737" y="636" width="21" height="17" fill="#000" stroke="#fff" stroke-width="2"/><rect x="1739" y="638" width="17" height="13" fill="url(#rb)"/>
<path d="M1473 666H1773" stroke="#3e3e3e"/>
<text x="1488" y="690" textLength="103">Recently Used Colors</text>
<use href="#gear" transform="translate(1744 687) scale(.68)"/><path d="M1751 689H1754L1752.500 691Z" fill="#d8d8d8"/>
<rect x="1488" y="703" width="270" height="18" fill="#3f3f3f"/>
<g>
<rect x="1489" y="704" width="16" height="16" fill="#5b45e8"/><rect x="1507" y="704" width="16" height="16" fill="#f01020"/><rect x="1525" y="704" width="16" height="16" fill="#000"/><rect x="1543" y="704" width="16" height="16" fill="#fff"/><rect x="1561" y="704" width="16" height="16" fill="#fff"/><rect x="1579" y="704" width="16" height="16" fill="#fff"/><rect x="1597" y="704" width="16" height="16" fill="#000"/><rect x="1615" y="704" width="16" height="16" fill="#6a5c48"/><rect x="1633" y="704" width="16" height="16" fill="#252422"/><rect x="1651" y="704" width="16" height="16" fill="#2c3050"/><rect x="1669" y="704" width="16" height="16" fill="#4f5a2a"/><rect x="1687" y="704" width="16" height="16" fill="#1f2130"/><rect x="1705" y="704" width="16" height="16" fill="#7a7060"/><rect x="1723" y="704" width="16" height="16" fill="#fff"/><rect x="1741" y="704" width="16" height="16" fill="#251a0a"/>
</g>
<rect x="1488" y="725" width="270" height="153" fill="#404040"/>
<rect x="1488" y="725" width="3" height="153" fill="#4a4a4a"/>
<path d="M1491 755.500H1739M1491 784.500H1739M1491 813.500H1739M1491 842.500H1739M1491 871.500H1739" stroke="#444"/>
<rect x="1744" y="729" width="10" height="160" rx="5" fill="#696969"/>
<path d="M1498.500 737L1502 741.500L1498.500 746M1498.500 766L1502 770.500L1498.500 775M1498.500 795L1502 799.500L1498.500 804M1498.500 824L1502 828.500L1498.500 833M1498.500 853L1502 857.500L1498.500 862" fill="none" stroke="#c8c8c8"/>
<use href="#folder" x="1517" y="741.500"/><use href="#folder" x="1517" y="770.500"/><use href="#folder" x="1517" y="799.500"/><use href="#folder" x="1517" y="828.500"/><use href="#folder" x="1517" y="857.500"/>
<text x="1532" y="745.500" style="fill:#d4d4d4" textLength="21">RGB</text><text x="1532" y="774.500" style="fill:#d4d4d4" textLength="29">CMYK</text><text x="1532" y="803.500" style="fill:#d4d4d4" textLength="47">Grayscale</text><text x="1532" y="832.500" style="fill:#d4d4d4" textLength="29">Pastel</text><text x="1532" y="861.500" style="fill:#d4d4d4" textLength="24">Light</text>
</svg>
</body></html>
